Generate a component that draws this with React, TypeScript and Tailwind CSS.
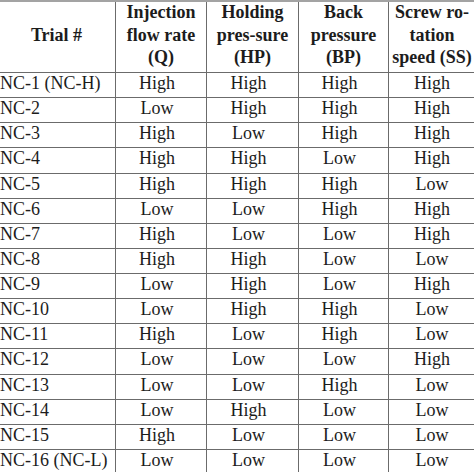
import React from "react";

const headers: React.ReactNode[] = [
  "Trial #",
  <>Injection<br />flow rate<br />(Q)</>,
  <>Holding<br />pres-sure<br />(HP)</>,
  <>Back<br />pressure<br />(BP)</>,
  <>Screw ro-<br />tation<br />speed (SS)</>,
];

const rows: [string, string, string, string, string][] = [
  ["NC-1 (NC-H)", "High", "High", "High", "High"],
  ["NC-2", "Low", "High", "High", "High"],
  ["NC-3", "High", "Low", "High", "High"],
  ["NC-4", "High", "High", "Low", "High"],
  ["NC-5", "High", "High", "High", "Low"],
  ["NC-6", "Low", "Low", "High", "High"],
  ["NC-7", "High", "Low", "Low", "High"],
  ["NC-8", "High", "High", "Low", "Low"],
  ["NC-9", "Low", "High", "Low", "High"],
  ["NC-10", "Low", "High", "High", "Low"],
  ["NC-11", "High", "Low", "High", "Low"],
  ["NC-12", "Low", "Low", "Low", "High"],
  ["NC-13", "Low", "Low", "High", "Low"],
  ["NC-14", "Low", "High", "Low", "Low"],
  ["NC-15", "High", "Low", "Low", "Low"],
  ["NC-16 (NC-L)", "Low", "Low", "Low", "Low"],
];

const App = () => {
  return (
    <div className="w-[474px] h-[472px] overflow-hidden bg-white text-[#1c1c1c] font-['Liberation_Serif','Times_New_Roman',serif] text-[18px]">
      <div className="ml-[-2px] w-[477px] border-t-2 border-[#a3a3a3] grid grid-cols-[118px_91px_92px_90px_86px]">
        {/* Header */}
        {headers.map((h, i) => (
          <div
            key={i}
            className={`h-[71px] border-b border-[#6b6b6b] ${i < 4 ? "border-r" : ""} flex items-center justify-center text-center font-bold leading-[22.5px] pb-[4px] whitespace-nowrap`}
          >
            <div>{h}</div>
          </div>
        ))}

        {/* Body */}
        {rows.map((row, r) =>
          row.map((cell, c) => (
            <div
              key={`${r}-${c}`}
              className={`h-[25.13px] border-b border-[#6b6b6b] ${c < 4 ? "border-r" : ""} flex items-center pb-[4px] leading-none whitespace-nowrap ${
                c === 0 ? "justify-start pl-[2px]" : c === 4 ? "justify-center" : "justify-center pr-[8px]"
              }`}
            >
              {cell}
            </div>
          ))
        )}
      </div>
    </div>
  );
};

export default App;
